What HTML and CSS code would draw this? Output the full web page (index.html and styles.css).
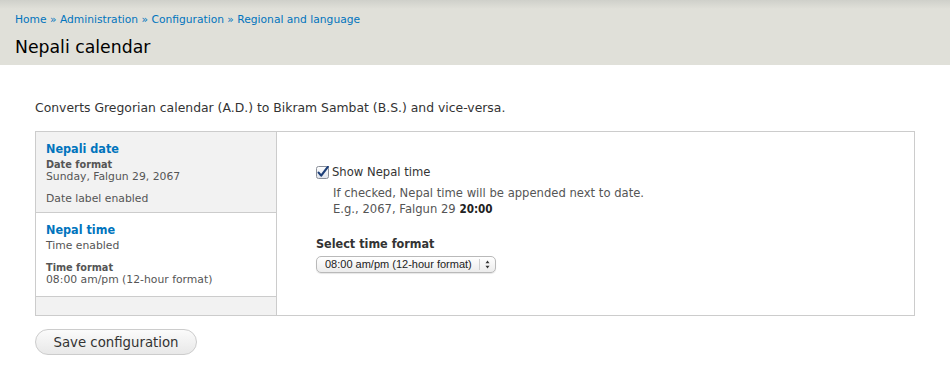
FILE: index.html
```html
<!DOCTYPE html>
<html lang="en">
<head>
  <meta charset="UTF-8" />
  <title>Nepali calendar</title>
  <link rel="stylesheet" href="styles.css">
</head>
<body>
  <header class="page-header">
    <nav class="breadcrumb">
      <a href="#">Home</a> » <a href="#">Administration</a> » <a href="#">Configuration</a> » <a href="#">Regional and language</a>
    </nav>
    <h1>Nepali calendar</h1>
  </header>

  <main class="content">
    <p class="intro">Converts Gregorian calendar (A.D.) to Bikram Sambat (B.S.) and vice-versa.</p>

    <div class="vertical-tabs">
      <ul class="tab-list">
        <li class="tab">
          <a href="#">Nepali date</a>
          <div class="summary">
            <strong>Date format</strong><br>
            Sunday, Falgun 29, 2067
            <span class="gap">Date label enabled</span>
          </div>
        </li>
        <li class="tab selected">
          <a href="#">Nepal time</a>
          <div class="summary">
            Time enabled
            <span class="gap"><strong>Time format</strong><br>08:00 am/pm (12-hour format)</span>
          </div>
        </li>
        <li class="tab-filler"></li>
      </ul>

      <div class="tab-pane">
        <div class="form-item">
          <label class="checkbox">
            <svg width="13" height="13" viewBox="0 0 13 13">
              <defs>
                <linearGradient id="cb" x1="0" y1="0" x2="0" y2="1">
                  <stop offset="0" stop-color="#ffffff"/>
                  <stop offset="1" stop-color="#dfe3ea"/>
                </linearGradient>
              </defs>
              <rect x="0.5" y="0.5" width="12" height="12" rx="2" fill="url(#cb)" stroke="#8a8f99"/>
              <path d="M2.6 6.6 L5.2 9.6 L11.8 0.8" fill="none" stroke="#1d3f78" stroke-width="2.2" stroke-linecap="round" stroke-linejoin="round"/>
            </svg>
            Show Nepal time
          </label>
          <div class="description">
            If checked, Nepal time will be appended next to date.<br>
            E.g., 2067, Falgun 29 <strong>20:00</strong>
          </div>
        </div>

        <div class="form-item">
          <label class="field-label" for="time-format">Select time format</label>
          <div class="select-wrap">
            <select id="time-format">
              <option>08:00 am/pm (12-hour format)</option>
              <option>20:00 (24-hour format)</option>
            </select>
            <svg class="select-arrows" width="17" height="15" viewBox="0 0 17 15">
              <line x1="0.5" y1="2" x2="0.5" y2="13" stroke="#cfcfcf"/>
              <path d="M6.5 6.3 L8.5 3.5 L10.5 6.3 Z M6.5 8.7 L8.5 11.5 L10.5 8.7 Z" fill="#333"/>
            </svg>
          </div>
        </div>
      </div>
    </div>

    <button class="button" type="submit">Save configuration</button>
  </main>
</body>
</html>
```

FILE: styles.css
```css
:root {
  --link-color: #0074bd;
  --text-color: #333;
  --border-color: #ccc;
  --tab-bg: #f2f2f2;
}

body {
  font-family: 'DejaVu Sans', sans-serif;
  color: var(--text-color);
  background: #fff;
  margin: 0;
  padding: 0;
}

a {
  color: var(--link-color);
  text-decoration: none;
}

strong {
  font-family: 'DejaVu Sans Condensed', 'DejaVu Sans', sans-serif;
  font-stretch: condensed;
}

.page-header {
  background: linear-gradient(to bottom, #cfd0ca 0, #e0e0d9 9px, #e0e0d9 100%);
  height: 65px;
  padding: 13px 15px 0;
  box-sizing: border-box;
}

.breadcrumb {
  font-size: 10.7px;
  line-height: 14px;
  color: var(--link-color);
}

.page-header h1 {
  font-size: 17.3px;
  font-weight: normal;
  color: #000;
  margin: 9px 0 0;
  line-height: 22px;
}

.content {
  padding: 0 35px;
}

.intro {
  font-size: 12.4px;
  line-height: 16px;
  margin: 35px 0 15px;
}

.vertical-tabs {
  display: flex;
  border: 1px solid var(--border-color);
  width: 878px;
}

.tab-list {
  list-style: none;
  margin: 0;
  padding: 0;
  width: 240px;
  display: flex;
  flex-direction: column;
  border-right: 1px solid var(--border-color);
}

.tab {
  background: var(--tab-bg);
  padding: 8px 10px 7px;
  border-bottom: 1px solid var(--border-color);
}

.tab.selected {
  background: #fff;
  padding-bottom: 10px;
}

.tab a {
  display: block;
  font-family: 'DejaVu Sans Condensed', 'DejaVu Sans', sans-serif;
  font-stretch: condensed;
  font-size: 12.5px;
  font-weight: bold;
  line-height: 17px;
  margin-bottom: 2px;
}

.summary {
  font-size: 10.8px;
  line-height: 12px;
  color: #555;
}

.summary .gap {
  display: block;
  margin-top: 10px;
}

.tab-filler {
  flex: 1;
  background: var(--tab-bg);
}

.tab-pane {
  flex: 1;
  padding: 32px 39px 18px;
}

.form-item {
  margin-bottom: 19px;
}

.form-item:last-child {
  margin-bottom: 24px;
}

.checkbox {
  display: flex;
  align-items: center;
  gap: 3px;
  font-size: 11.6px;
  line-height: 16px;
}

.description {
  font-size: 11.6px;
  line-height: 16px;
  color: #555;
  margin: 5px 0 0 17px;
}

.description strong {
  color: #222;
}

.field-label {
  display: block;
  font-family: 'DejaVu Sans Condensed', 'DejaVu Sans', sans-serif;
  font-stretch: condensed;
  font-size: 12.5px;
  font-weight: bold;
  line-height: 16px;
  margin-bottom: 4px;
}

.select-wrap {
  position: relative;
  width: 180px;
}

.select-wrap select {
  appearance: none;
  -webkit-appearance: none;
  display: block;
  box-sizing: border-box;
  width: 180px;
  height: 17px;
  padding: 0 0 0 8px;
  border: 1px solid #b9b9b9;
  border-radius: 5px;
  background: linear-gradient(to bottom, #ffffff, #ececec);
  font-family: 'Liberation Sans', sans-serif;
  font-size: 11px;
  line-height: 15px;
  color: #222;
  box-shadow: 0 1px 1px rgba(0,0,0,0.1);
}

.select-arrows {
  position: absolute;
  right: 0;
  top: 1px;
  pointer-events: none;
}

.button {
  margin-top: 13px;
  width: 162px;
  height: 26px;
  border: 1px solid #ccc;
  border-radius: 13px;
  background: linear-gradient(to bottom, #fbfbfb, #e8e8e8);
  font-family: 'DejaVu Sans', sans-serif;
  font-size: 13.3px;
  color: #333;
  cursor: pointer;
}
```
